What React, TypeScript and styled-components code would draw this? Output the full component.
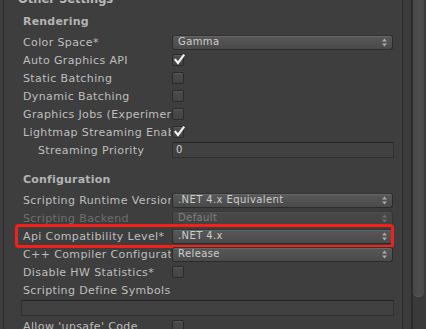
import React from 'react';
import styled, { createGlobalStyle, css } from 'styled-components';

const GlobalStyle = createGlobalStyle`
    html, body {
        margin:0;
        padding:0;
        background:#3e3e3e;
        overflow:hidden;
    }
    body {
        font:normal 400 11px/1 "DejaVu Sans", sans-serif;
        color:#bfbfbf;
    }
`

const Page = styled.div`
    display:flex;
    height:329px;
    overflow:hidden;
`
const Gutter = styled.div`
    width:3px;
    flex:none;
`
const Inspector = styled.div`
    width:400px;
    flex:none;
    box-sizing:border-box;
    border-left:1px solid #2b2b2b;
    border-right:1px solid #2b2b2b;
    overflow:hidden;
`
const Content = styled.div`
    margin-top:-9px;
    padding-right:8px;
`
const Divider = styled.div`
    width:8px;
    flex:none;
    background:#3b3b3b;
    border-right:2px solid #2c2c2c;
`
const ScrollTrack = styled.div`
    flex:1;
    background:#3a3a3a;
    padding-right:2px;
`
const ScrollThumb = styled.div`
    height:297px;
    background:linear-gradient(90deg,#474747,#4e4e4e 60%,#484848);
    border-radius:0 0 6px 6px;
    box-shadow:inset 0 -1px 0 #555;
`

const FoldHeader = styled.div`
    height:16px;
    line-height:16px;
    padding-left:14px;
    font-weight:700;
    font-size:11.5px;
    color:#b8b8b8;
`
const SectionTitle = styled.div<{ $top: number }>`
    margin-top:${p => p.$top}px;
    height:22px;
    line-height:22px;
    padding-left:19px;
    font-weight:700;
    color:#b4b4b4;
    letter-spacing:0.2px;
`
const Row = styled.div<{ $highlight?: boolean }>`
    position:relative;
    display:flex;
    align-items:center;
    height:18px;
    padding-left:19px;
    ${p => p.$highlight && css`
        &::after {
            content:'';
            position:absolute;
            top:-3px;
            bottom:-3px;
            left:11px;
            right:0;
            border:3px solid #f4211b;
            border-radius:4px;
            pointer-events:none;
        }
    `}
`
const Label = styled.div<{ $indent?: boolean; $disabled?: boolean; $full?: boolean }>`
    width:${p => p.$full ? 'auto' : '148px'};
    margin-right:${p => p.$full ? '0' : '1px'};
    flex:none;
    box-sizing:border-box;
    padding-left:${p => p.$indent ? '15px' : '0'};
    white-space:nowrap;
    overflow:hidden;
    color:${p => p.$disabled ? '#6f6f6f' : '#bfbfbf'};
    letter-spacing:0.38px;
`
const Dropdown = styled.div<{ $disabled?: boolean }>`
    flex:1;
    display:flex;
    align-items:center;
    justify-content:space-between;
    height:15px;
    box-sizing:border-box;
    margin-right:1px;
    padding:0 5px 0 5px;
    background:linear-gradient(#585858,#4a4a4a);
    border:1px solid #2c2c2c;
    border-top-color:#333;
    border-radius:3px;
    box-shadow:inset 0 1px 0 #666;
    font-size:10px;
    color:#cdcdcd;
    letter-spacing:0.4px;
    opacity:${p => p.$disabled ? 0.45 : 1};
`
const Checkbox = styled.div`
    width:12px;
    height:12px;
    box-sizing:border-box;
    position:relative;
    background:linear-gradient(#4c4c4c,#434343);
    border:1px solid #2a2a2a;
    border-radius:2px;
    box-shadow:inset 0 1px 0 #575757;
`
const CheckMark = styled.svg`
    position:absolute;
    left:0;
    top:-2px;
`
const TextField = styled.div<{ $wide?: boolean }>`
    flex:1;
    height:16px;
    box-sizing:border-box;
    margin-left:${p => p.$wide ? '-2px' : '0'};
    padding-left:3px;
    line-height:14px;
    font-size:10px;
    color:#cfcfcf;
    background:#414141;
    border:1px solid #303030;
    border-top-color:#222;
`

const Arrows = () => (
  <svg width="5" height="9" viewBox="0 0 5 9">
    <path d="M2.5 0.5 L5 3.5 L0 3.5 Z" fill="#a9a9a9" />
    <path d="M0 5.5 L5 5.5 L2.5 8.5 Z" fill="#a9a9a9" />
  </svg>
)

type Field =
  | { kind: 'select'; value: string; disabled?: boolean }
  | { kind: 'check'; checked?: boolean }
  | { kind: 'text'; value: string }

type Item = { label: string; field?: Field; indent?: boolean; disabled?: boolean; highlight?: boolean }

const rendering: Item[] = [
  { label: 'Color Space*', field: { kind: 'select', value: 'Gamma' } },
  { label: 'Auto Graphics API', field: { kind: 'check', checked: true } },
  { label: 'Static Batching', field: { kind: 'check' } },
  { label: 'Dynamic Batching', field: { kind: 'check' } },
  { label: 'Graphics Jobs (Experimental)*', field: { kind: 'check' } },
  { label: 'Lightmap Streaming Enabled', field: { kind: 'check', checked: true } },
  { label: 'Streaming Priority', indent: true, field: { kind: 'text', value: '0' } },
]

const configuration: Item[] = [
  { label: 'Scripting Runtime Version*', field: { kind: 'select', value: '.NET 4.x Equivalent' } },
  { label: 'Scripting Backend', disabled: true, field: { kind: 'select', value: 'Default', disabled: true } },
  { label: 'Api Compatibility Level*', highlight: true, field: { kind: 'select', value: '.NET 4.x' } },
  { label: 'C++ Compiler Configuration', field: { kind: 'select', value: 'Release' } },
  { label: 'Disable HW Statistics*', field: { kind: 'check' } },
]

const renderField = (f: Field) => {
  if (f.kind === 'select') {
    return (
      <Dropdown $disabled={f.disabled}>
        <span>{f.value}</span>
        <Arrows />
      </Dropdown>
    )
  }
  if (f.kind === 'check') {
    return (
      <Checkbox>
        {f.checked && (
          <CheckMark width="13" height="13" viewBox="0 0 13 13">
            <path d="M2.5 7 L5 10 L10.5 2.5" fill="none" stroke="#f2f2f2" strokeWidth="2.2" strokeLinecap="square" />
          </CheckMark>
        )}
      </Checkbox>
    )
  }
  return <TextField>{f.value}</TextField>
}

const PropRow = ({ item }: { item: Item }) => (
  <Row $highlight={item.highlight}>
    <Label $indent={item.indent} $disabled={item.disabled}>{item.label}</Label>
    {item.field && renderField(item.field)}
  </Row>
)

export default function App() {
  return (
    <Page>
      <GlobalStyle />
      <Gutter />
      <Inspector>
        <Content>
          <FoldHeader>Other Settings</FoldHeader>

          <SectionTitle $top={4}>Rendering</SectionTitle>
          {rendering.map(item => <PropRow key={item.label} item={item} />)}

          <SectionTitle $top={10}>Configuration</SectionTitle>
          {configuration.map(item => <PropRow key={item.label} item={item} />)}

          <Row>
            <Label $full>Scripting Define Symbols</Label>
          </Row>
          <Row>
            <TextField $wide />
          </Row>
          <Row>
            <Label>Allow 'unsafe' Code</Label>
            <Checkbox />
          </Row>
        </Content>
      </Inspector>
      <Divider />
      <ScrollTrack>
        <ScrollThumb />
      </ScrollTrack>
    </Page>
  );
}
